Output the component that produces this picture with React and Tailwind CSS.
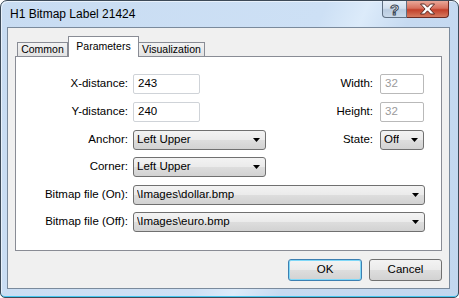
import React from "react";

const selectBg =
  "bg-[linear-gradient(to_bottom,#f3f3f3_0%,#ebebeb_48%,#dddddd_52%,#d2d2d2_100%)]";

function Arrow() {
  return (
    <svg width="7" height="4" viewBox="0 0 7 4" className="shrink-0">
      <path d="M0 0h7L3.5 4z" fill="#000" />
    </svg>
  );
}

function TextBox({ value, width, disabled }) {
  return (
    <div
      className={
        "h-[20px] flex items-center pl-[4px] bg-white rounded-[2px] border " +
        (disabled ? "border-[#b9b9b9] text-[#9a9a9a]" : "border-[#cfd3d8] text-black")
      }
      style={{ width }}
    >
      {value}
    </div>
  );
}

function Select({ value, width }) {
  return (
    <div
      className={
        "h-[20px] flex items-center justify-between pl-[3px] pr-[5px] rounded-[3px] border border-[#707070] " +
        selectBg
      }
      style={{ width }}
    >
      <span className="truncate">{value}</span>
      <Arrow />
    </div>
  );
}

function Label({ children }) {
  return <div className="w-[112px] text-right shrink-0">{children}</div>;
}

function Row({ label, children, right, className = "" }) {
  return (
    <div className={"flex items-center h-[20px] " + className}>
      <Label>{label}</Label>
      <div className="ml-[5px]">{children}</div>
      <div className="flex-1" />
      {right}
    </div>
  );
}

function RightField({ label, children }) {
  return (
    <div className="flex items-center">
      <span>{label}</span>
      <div className="ml-[7px]">{children}</div>
    </div>
  );
}

export default function App() {
  return (
    <div className="w-[459px] h-[298px] font-['Liberation_Sans',Arial,sans-serif] text-[11.5px] text-black">
      <div className="relative flex flex-col w-full h-full rounded-t-[7px] rounded-b-[5px] border border-[#3d4a58] bg-[linear-gradient(115deg,#c8dcf2_0%,#cde0f5_55%,#dcebfa_62%,#c6daf1_70%,#c2d7ef_100%)] shadow-[inset_0_-1px_0_#46c6f0,inset_1px_1px_0_#e8f1fb]">
        {/* title bar */}
        <div className="h-[26px] flex items-center pl-[9px] text-[12px] text-black">
          H1 Bitmap Label 21424
        </div>
        <div className="absolute top-0 right-[9px] flex h-[17px]">
          <div className="w-[25px] h-full flex items-center justify-center rounded-bl-[4px] border border-t-0 border-[#5f6f82] bg-[linear-gradient(to_bottom,#e6eef7_0%,#d2dfee_45%,#b9cbe0_55%,#c9d9ea_100%)]">
            <span className="text-[15px] font-bold leading-none text-white [-webkit-text-stroke:1px_#3a4756]">?</span>
          </div>
          <div className="w-[42px] h-full flex items-center justify-center rounded-br-[4px] border border-l-0 border-t-0 border-[#6b2a22] bg-[linear-gradient(to_bottom,#e9a899_0%,#d7705d_45%,#c2402a_55%,#d67a5f_100%)]">
            <svg width="17" height="12" viewBox="0 0 17 12">
              <path
                d="M1.5 1h4l3 3.2L11.5 1h4l-4.6 5 4.6 5h-4l-3-3.2L5.5 11h-4l4.6-5z"
                fill="#fff"
                stroke="#4a1d16"
                strokeWidth="0.9"
                strokeLinejoin="round"
              />
            </svg>
          </div>
        </div>

        {/* client */}
        <div className="ml-[6px] mr-[8px] h-[262px] border border-[#7a8a9c] bg-[#f0f0f0] pt-[8px] pl-[7px] pr-[7px]">
          {/* tabs */}
          <div className="flex items-end h-[20px] pl-[2px]">
            <div className="w-[51px] h-[14px] flex items-center justify-center text-[10.5px] border border-b-0 border-[#898c95] bg-[linear-gradient(to_bottom,#f2f2f2,#e3e3e3)]">
              Common
            </div>
            <div className="relative z-10 w-[71px] h-[21px] -mb-px flex items-start pt-[2px] justify-center text-[10.5px] border border-b-0 border-[#898c95] bg-white">
              Parameters
            </div>
            <div className="w-[66px] h-[14px] flex items-center justify-center text-[10.5px] border border-b-0 border-l-0 border-[#898c95] bg-[linear-gradient(to_bottom,#f2f2f2,#e3e3e3)]">
              Visualization
            </div>
          </div>

          {/* panel */}
          <div className="w-[427px] h-[195px] border border-[#898c95] bg-white pt-[17px] pr-[17px]">
            <Row
              label="X-distance:"
              right={
                <RightField label="Width:">
                  <TextBox value="32" width={44} disabled />
                </RightField>
              }
            >
              <TextBox value="243" width={67} />
            </Row>
            <Row
              className="mt-[8px]"
              label="Y-distance:"
              right={
                <RightField label="Height:">
                  <TextBox value="32" width={44} disabled />
                </RightField>
              }
            >
              <TextBox value="240" width={67} />
            </Row>
            <Row
              className="mt-[8px]"
              label="Anchor:"
              right={
                <RightField label="State:">
                  <Select value="Off" width={44} />
                </RightField>
              }
            >
              <Select value="Left Upper" width={133} />
            </Row>
            <Row className="mt-[7px]" label="Corner:">
              <Select value="Left Upper" width={133} />
            </Row>
            <Row className="mt-[8px]" label="Bitmap file (On):">
              <Select value="\Images\dollar.bmp" width={292} />
            </Row>
            <Row className="mt-[7px]" label="Bitmap file (Off):">
              <Select value="\Images\euro.bmp" width={292} />
            </Row>
          </div>

          {/* buttons */}
          <div className="flex justify-end w-[427px] mt-[8px] gap-[7px]">
            <div
              className={
                "w-[74px] h-[22px] flex items-center justify-center rounded-[3px] border border-[#3c7fb1] shadow-[inset_0_0_0_1px_#7fd8f8] " +
                selectBg
              }
            >
              OK
            </div>
            <div
              className={
                "w-[73px] h-[22px] flex items-center justify-center rounded-[3px] border border-[#707070] " +
                selectBg
              }
            >
              Cancel
            </div>
          </div>
        </div>
      </div>
    </div>
  );
}
